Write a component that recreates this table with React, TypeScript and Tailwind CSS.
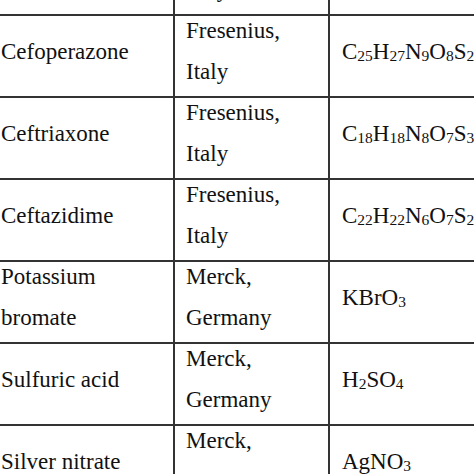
import React from "react";

type Part = { t: string; sub?: boolean };

type Row = {
  name: string[];
  maker: string[];
  formula: Part[];
};

const f = (s: string): Part[] =>
  s.split(/(\d+)/).filter(Boolean).map((t) => ({ t, sub: /^\d+$/.test(t) }));

// first row sits mostly above the top edge, only the tail of "Italy" shows
const rows: Row[] = [
  { name: [], maker: ["Fresenius,", "Italy"], formula: [] },
  { name: ["Cefoperazone"], maker: ["Fresenius,", "Italy"], formula: f("C25H27N9O8S2") },
  { name: ["Ceftriaxone"], maker: ["Fresenius,", "Italy"], formula: f("C18H18N8O7S3") },
  { name: ["Ceftazidime"], maker: ["Fresenius,", "Italy"], formula: f("C22H22N6O7S2") },
  { name: ["Potassium", "bromate"], maker: ["Merck,", "Germany"], formula: f("KBrO3") },
  { name: ["Sulfuric acid"], maker: ["Merck,", "Germany"], formula: f("H2SO4") },
  { name: ["Silver nitrate"], maker: ["Merck,", "Germany"], formula: f("AgNO3") },
];

const Lines = ({ items }: { items: string[] }) => (
  <div className="flex flex-col">
    {items.map((l) => (
      <span key={l} className="whitespace-nowrap">
        {l}
      </span>
    ))}
  </div>
);

const Formula = ({ parts }: { parts: Part[] }) => (
  <span className="whitespace-nowrap">
    {parts.map((p, i) =>
      p.sub ? (
        <sub key={i} className="text-[15.5px] leading-none bottom-[-2.5px]">
          {p.t}
        </sub>
      ) : (
        <span key={i}>{p.t}</span>
      )
    )}
  </span>
);

export default function App() {
  return (
    <div
      className="w-[474px] h-[474px] overflow-hidden bg-white text-[#111]"
      style={{ fontFamily: '"Liberation Serif", "Times New Roman", serif' }}
    >
      <div className="-mt-[66px] -ml-[12px] w-[520px] text-[23px] leading-[41px]">
        {rows.map((r, i) => (
          <div key={i} className="flex h-[82px] border-b-2 border-[#333]">
            <div className="w-[187px] shrink-0 border-r-2 border-[#333] pl-[13px] pb-[10px] flex items-center">
              <Lines items={r.name} />
            </div>
            <div className="w-[155px] shrink-0 border-r-2 border-[#333] pl-[11px] pb-[10px] flex items-center">
              <Lines items={r.maker} />
            </div>
            <div className="flex-1 pl-[12px] pb-[10px] flex items-center">
              <Formula parts={r.formula} />
            </div>
          </div>
        ))}
      </div>
    </div>
  );
}
